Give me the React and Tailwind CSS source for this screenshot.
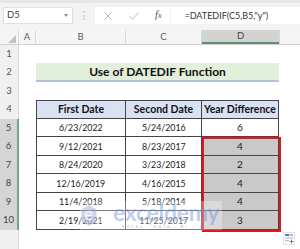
import React from "react";

const data = [
  ["6/23/2022", "5/24/2016", "6"],
  ["9/12/2021", "8/23/2017", "4"],
  ["8/24/2020", "3/23/2018", "2"],
  ["12/16/2019", "4/16/2015", "4"],
  ["11/4/2018", "5/18/2014", "4"],
  ["2/19/2021", "11/25/2017", "3"],
];

function RowHead({ n, sel }) {
  return sel ? (
    <div className="w-[19px] shrink-0 bg-[#d5d5d5] border-r-2 border-[#79a386] flex items-center justify-center text-[9.5px] text-[#444]">
      {n}
    </div>
  ) : (
    <div className="w-[19px] shrink-0 bg-[#f0f0f0] border-r border-[#d8d8d8] flex items-center justify-center text-[9.5px] text-[#555]">
      {n}
    </div>
  );
}

function Empty({ n, h }) {
  return (
    <div className={"flex " + h}>
      <RowHead n={n} />
      <div className="flex-1" />
    </div>
  );
}

export default function App() {
  return (
    <div className="relative w-[300px] h-[249px] overflow-hidden bg-white font-['Lato',sans-serif] text-black">
      {/* formula bar */}
      <div className="h-[30px] bg-[#f3f3f3] border-t-[3px] border-[#e6e6e6] pt-[4px] flex items-start">
        <div className="ml-[3px] w-[70px] h-[17px] bg-white border border-[#e0e0e0] flex items-center justify-between pl-[3px] pr-[4px]">
          <span className="text-[9.5px] text-[#404040]">D5</span>
          <span className="w-0 h-0 border-l-[2px] border-r-[2px] border-t-[3px] border-l-transparent border-r-transparent border-t-[#8a8a8a]" />
        </div>
        <div className="w-[22px] h-[17px] flex flex-col items-center justify-center gap-[1.5px]">
          <span className="w-[2px] h-[2px] rounded-full bg-[#c8c8c8]" />
          <span className="w-[2px] h-[2px] rounded-full bg-[#c8c8c8]" />
          <span className="w-[2px] h-[2px] rounded-full bg-[#c8c8c8]" />
        </div>
        <div className="flex-1 h-[17px] bg-white flex items-center">
          <svg className="ml-[9px]" width="8" height="8" viewBox="0 0 8 8">
            <path d="M0.5 0.5L7.5 7.5M7.5 0.5L0.5 7.5" stroke="#bdbdbd" strokeWidth="1" />
          </svg>
          <svg className="ml-[17px]" width="10" height="8" viewBox="0 0 10 8">
            <path d="M0.5 4.2L3.6 7.3L9.5 0.6" stroke="#bdbdbd" strokeWidth="1" fill="none" />
          </svg>
          <span className="ml-[16px] font-['Liberation_Serif',serif] italic text-[10.5px] text-[#555] leading-none">
            f<span className="text-[8px]">x</span>
          </span>
          <span className="ml-[9px] w-px h-[14px] bg-[#ededed]" />
          <span className="ml-[13px] text-[9px] text-[#333]">=DATEDIF(C5,B5,"y")</span>
        </div>
      </div>

      {/* column headers */}
      <div className="h-[15px] flex bg-[#f5f5f5] border-b border-[#d0d0d0] text-[9.5px] text-[#5e5e5e]">
        <div className="w-[19px] shrink-0 border-r border-[#d8d8d8] flex items-end justify-end pr-[2px] pb-[1px]">
          <span className="w-0 h-0 border-l-[8px] border-l-transparent border-b-[8px] border-b-[#c2c2c2]" />
        </div>
        <div className="w-[17px] shrink-0 border-r border-[#d8d8d8] flex items-center justify-center">A</div>
        <div className="w-[90px] shrink-0 border-r border-[#d8d8d8] flex items-center justify-center">B</div>
        <div className="w-[76px] shrink-0 border-r border-[#d8d8d8] flex items-center justify-center">C</div>
        <div className="w-[77px] shrink-0 bg-[#d3d3d3] border-b-2 border-[#5f8f6e] flex items-center justify-center text-[#444]">D</div>
        <div className="flex-1 border-l border-[#d8d8d8]" />
      </div>

      {/* row 1 */}
      <Empty n={1} h="h-[18px]" />

      {/* row 2 title */}
      <div className="flex h-[19px]">
        <RowHead n={2} />
        <div className="w-[17px] shrink-0" />
        <div className="w-[243px] shrink-0 bg-[#e2efda] border-b-2 border-[#b3c2da] flex items-center justify-center text-[12px] font-bold text-[#111]">
          Use of DATEDIF Function
        </div>
        <div className="flex-1" />
      </div>

      {/* row 3 */}
      <Empty n={3} h="h-[18px]" />

      {/* row 4 table header */}
      <div className="flex h-[19px]">
        <RowHead n={4} />
        <div className="w-[17px] shrink-0" />
        <div className="w-[90px] shrink-0 bg-[#d9e1f2] border border-[#454545] flex items-center justify-center text-[10.5px] font-bold text-[#111]">
          First Date
        </div>
        <div className="w-[76px] shrink-0 bg-[#d9e1f2] border-y border-r border-[#454545] flex items-center justify-center text-[10.5px] font-bold text-[#111]">
          Second Date
        </div>
        <div className="w-[77px] shrink-0 bg-[#d9e1f2] border-y border-r border-[#454545] flex items-center justify-center text-[10.5px] font-bold text-[#111]">
          Year Difference
        </div>
        <div className="flex-1" />
      </div>

      {/* rows 5-10 */}
      {data.map((r, i) => (
        <div key={i} className={"flex " + (i % 2 === 0 ? "h-[18px]" : "h-[19px]")}>
          <RowHead n={i + 5} sel />
          <div className="w-[17px] shrink-0" />
          <div className="w-[90px] shrink-0 border-l border-r border-b border-[#454545] flex items-center justify-center text-[10px] text-[#1a1a1a]">
            <span className="inline-block scale-x-[0.88]">{r[0]}</span>
          </div>
          <div className="w-[76px] shrink-0 border-r border-b border-[#454545] flex items-center justify-center text-[10px] text-[#1a1a1a]">
            <span className="inline-block scale-x-[0.88]">{r[1]}</span>
          </div>
          <div
            className={
              "w-[77px] shrink-0 border-r border-b border-[#454545] flex items-center justify-center text-[10px] text-[#1a1a1a] " +
              (i === 0 ? "bg-white" : "bg-[#c9c9c9]")
            }
          >
            {r[2]}
          </div>
          <div className="flex-1" />
        </div>
      ))}

      {/* row 11 */}
      <Empty n="" h="h-[19px]" />

      {/* red highlight box */}
      <div className="absolute left-[202px] top-[137px] w-[79px] h-[95px] border-2 border-[#e3151d]" />

      {/* watermark */}
      <div className="absolute left-[80px] top-[201px] w-[142px] h-[29px] bg-white/30 flex items-start">
        <svg className="mt-[3px]" width="18" height="23" viewBox="0 0 18 23">
          <path d="M9 1L16.5 5.5V17.5L9 22L1.5 17.5V5.5Z" fill="#8da2d6" fillOpacity="0.45" />
          <path d="M12 9.5C11.3 8 10.3 7.5 9 7.5C7 7.5 5.5 9.2 5.5 11.5C5.5 13.8 7 15.5 9.2 15.5C10.4 15.5 11.4 15 12 14.2M5.8 11.3H12.2" stroke="#ffffff" strokeOpacity="0.8" strokeWidth="1.6" fill="none" />
        </svg>
        <div className="ml-[16px] flex flex-col items-start">
          <span className="text-[23px] leading-[23px] font-bold text-[#6f8fe0]/45 tracking-[-0.3px] -ml-[1px]">exceldemy</span>
          <span className="mt-[0px] ml-[8px] text-[4.5px] leading-[5px] tracking-[1.8px] text-[#8a8a8a]/60">EXCEL · DATA · BI</span>
        </div>
      </div>

      {/* quick analysis icon */}
      <svg className="absolute left-[283px] top-[232px]" width="12" height="13" viewBox="0 0 12 13">
        <rect x="0.5" y="0.5" width="11" height="12" fill="#ffffff" stroke="#c8c8c8" strokeDasharray="1 1" />
        <rect x="2" y="2" width="4" height="2" fill="#4a7fd0" />
        <rect x="6.5" y="2" width="3.5" height="2" fill="#9dbbe6" />
        <rect x="2" y="5.5" width="8" height="1" fill="#b5b5b5" />
        <rect x="2" y="8" width="4" height="1" fill="#b5b5b5" />
        <path d="M8.5 7.5V11.5M6.5 9.5H10.5" stroke="#7a7a7a" strokeWidth="1" />
      </svg>
    </div>
  );
}
